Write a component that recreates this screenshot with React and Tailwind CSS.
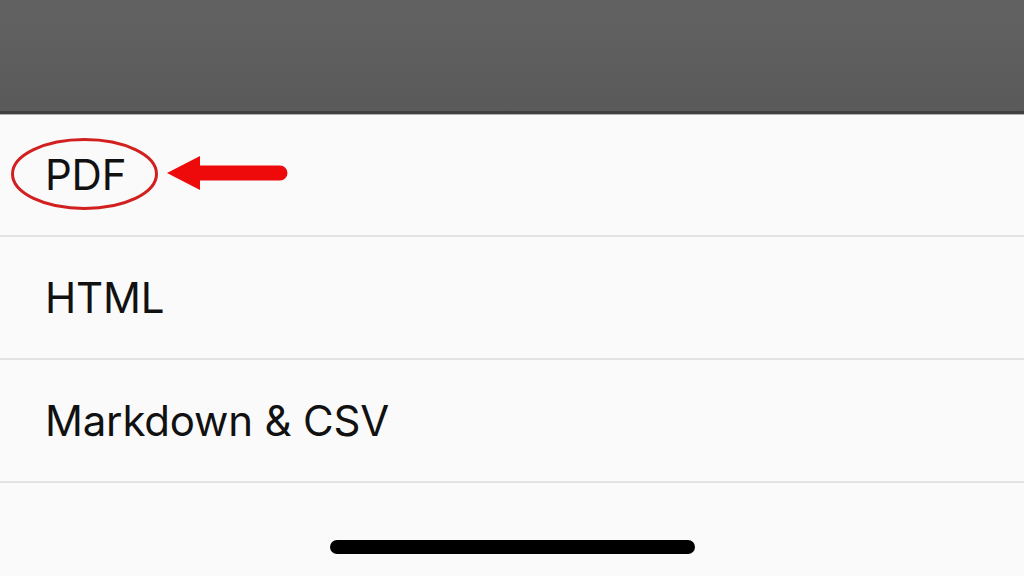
export default function App() {
  const rows = ["PDF", "HTML", "Markdown & CSV"];
  return (
    <div className="w-[1024px] h-[576px] overflow-hidden flex flex-col bg-[#fafafa]" style={{ fontFamily: "Inter, 'Noto Sans', sans-serif" }}>
      <div className="h-[111px] shrink-0 bg-gradient-to-b from-[#626262] to-[#5a5a5a]" />
      <div className="h-[3px] shrink-0 bg-[#404040]" />
      <div className="h-[1px] shrink-0 bg-[#b0b0b0]" />
      <div className="flex flex-col">
        {rows.map((r, i) => (
          <div key={r} className="relative h-[123px] shrink-0 border-b-2 border-[#e2e2e2] flex items-center pl-[45px] first:h-[122px]">
            <span className="text-[42px] leading-none text-[#111] tracking-[-0.2px]">{r}</span>
            {i === 0 && (
              <svg className="absolute left-0 top-0" width="320" height="122" viewBox="0 0 320 122">
                <ellipse cx="84.5" cy="59" rx="72" ry="34.5" fill="none" stroke="#d21f1f" strokeWidth="3" />
                <path d="M167 58 L200 41 L200 50.5 L280 50.5 A7.5 7.5 0 0 1 280 65.5 L200 65.5 L200 75 Z" fill="#ee0a0a" />
              </svg>
            )}
          </div>
        ))}
      </div>
      <div className="flex-1 flex justify-center pt-[57px]">
        <div className="w-[365px] h-[14px] rounded-full bg-black" />
      </div>
    </div>
  );
}
